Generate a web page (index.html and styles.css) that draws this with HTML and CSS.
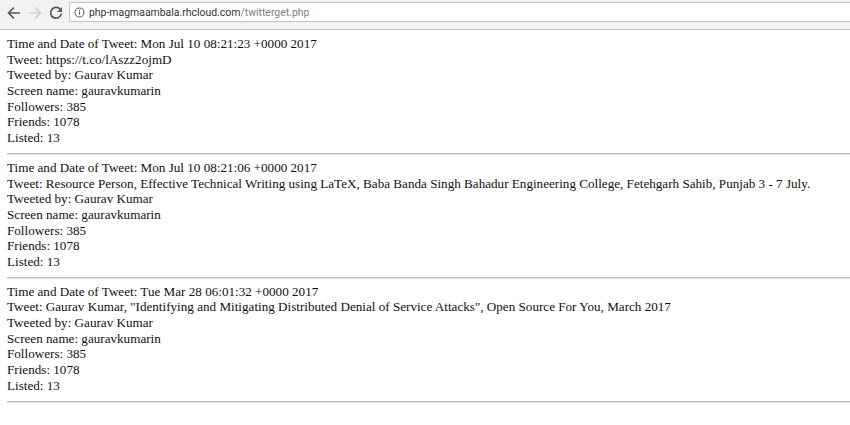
FILE: index.html
```html
<!DOCTYPE html>
<html>
<head>
    <meta charset="utf-8">
    <title>twitterget.php</title>
    <link rel="stylesheet" href="styles.css">
</head>
<body>
    <div class="toolbar">
        <div class="nav">
            <svg class="nav-icon" viewBox="0 0 14 14"><path d="M13 7H2M7 1.5 1.5 7 7 12.5" fill="none" stroke="#5a5a5a" stroke-width="1.7"/></svg>
            <svg class="nav-icon" viewBox="0 0 14 14"><path d="M1 7h11M7 1.5 12.5 7 7 12.5" fill="none" stroke="#cfcfcf" stroke-width="1.7"/></svg>
            <svg class="nav-icon" viewBox="0 0 14 14"><path d="M11.8 4.2A5.4 5.4 0 1 0 12.4 7.6" fill="none" stroke="#5a5a5a" stroke-width="1.7"/><path d="M13 1v5H8z" fill="#5a5a5a"/></svg>
        </div>
        <div class="address">
            <svg class="info-icon" viewBox="0 0 12 12"><circle cx="6" cy="6" r="4.9" fill="none" stroke="#5a5a5a" stroke-width="1.1"/><path d="M6 5.2v3.3M6 3.2v1.1" stroke="#5a5a5a" stroke-width="1.2"/></svg>
            <span class="host">php-magmaambala.rhcloud.com</span><span class="path">/twitterget.php</span>
        </div>
    </div>

    <div class="content">
        <div class="tweet">
            <div>Time and Date of Tweet: Mon Jul 10 08:21:23 +0000 2017</div>
            <div>Tweet: https://t.co/lAszz2ojmD</div>
            <div>Tweeted by: Gaurav Kumar</div>
            <div>Screen name: gauravkumarin</div>
            <div>Followers: 385</div>
            <div>Friends: 1078</div>
            <div>Listed: 13</div>
        </div>
        <hr>
        <div class="tweet">
            <div>Time and Date of Tweet: Mon Jul 10 08:21:06 +0000 2017</div>
            <div>Tweet: Resource Person, Effective Technical Writing using LaTeX, Baba Banda Singh Bahadur Engineering College, Fetehgarh Sahib, Punjab 3 - 7 July.</div>
            <div>Tweeted by: Gaurav Kumar</div>
            <div>Screen name: gauravkumarin</div>
            <div>Followers: 385</div>
            <div>Friends: 1078</div>
            <div>Listed: 13</div>
        </div>
        <hr>
        <div class="tweet">
            <div>Time and Date of Tweet: Tue Mar 28 06:01:32 +0000 2017</div>
            <div>Tweet: Gaurav Kumar, "Identifying and Mitigating Distributed Denial of Service Attacks", Open Source For You, March 2017</div>
            <div>Tweeted by: Gaurav Kumar</div>
            <div>Screen name: gauravkumarin</div>
            <div>Followers: 385</div>
            <div>Friends: 1078</div>
            <div>Listed: 13</div>
        </div>
        <hr>
    </div>
</body>
</html>
```

FILE: styles.css
```css
html, body {
    margin: 0;
    padding: 0;
    background-color: white;
    overflow: hidden;
}

.toolbar {
    display: flex;
    height: 27px;
    padding-top: 2px;
    background-color: #f2f2f2;
    border-bottom: 1px solid #c4c4c4;
    box-sizing: content-box;
}

.nav {
    display: flex;
    align-items: center;
    gap: 7px;
    height: 21px;
    padding: 0 6px 0 7px;
}

.nav-icon {
    width: 14px;
    height: 14px;
}

.address {
    display: flex;
    align-items: center;
    flex: 1;
    height: 20px;
    background-color: white;
    border: 1px solid #c4c4c4;
    border-right: none;
    border-radius: 2px 0 0 2px;
    font-family: Roboto, sans-serif;
    font-size: 10.45px;
    box-sizing: border-box;
}

.info-icon {
    width: 11px;
    height: 11px;
    margin: 0 4px 0 4px;
}

.host {
    color: #333;
}

.path {
    color: #808080;
}

.content {
    padding: 6px 0 0 7px;
    font-family: "Liberation Serif", serif;
    font-size: 13.14px;
    line-height: 15.65px;
    color: #111;
}

hr {
    margin: 7.5px 0 4.8px 0;
    border: none;
    border-top: 1px solid #bdbdbd;
    border-bottom: 1px solid #e2e2e2;
}
```
